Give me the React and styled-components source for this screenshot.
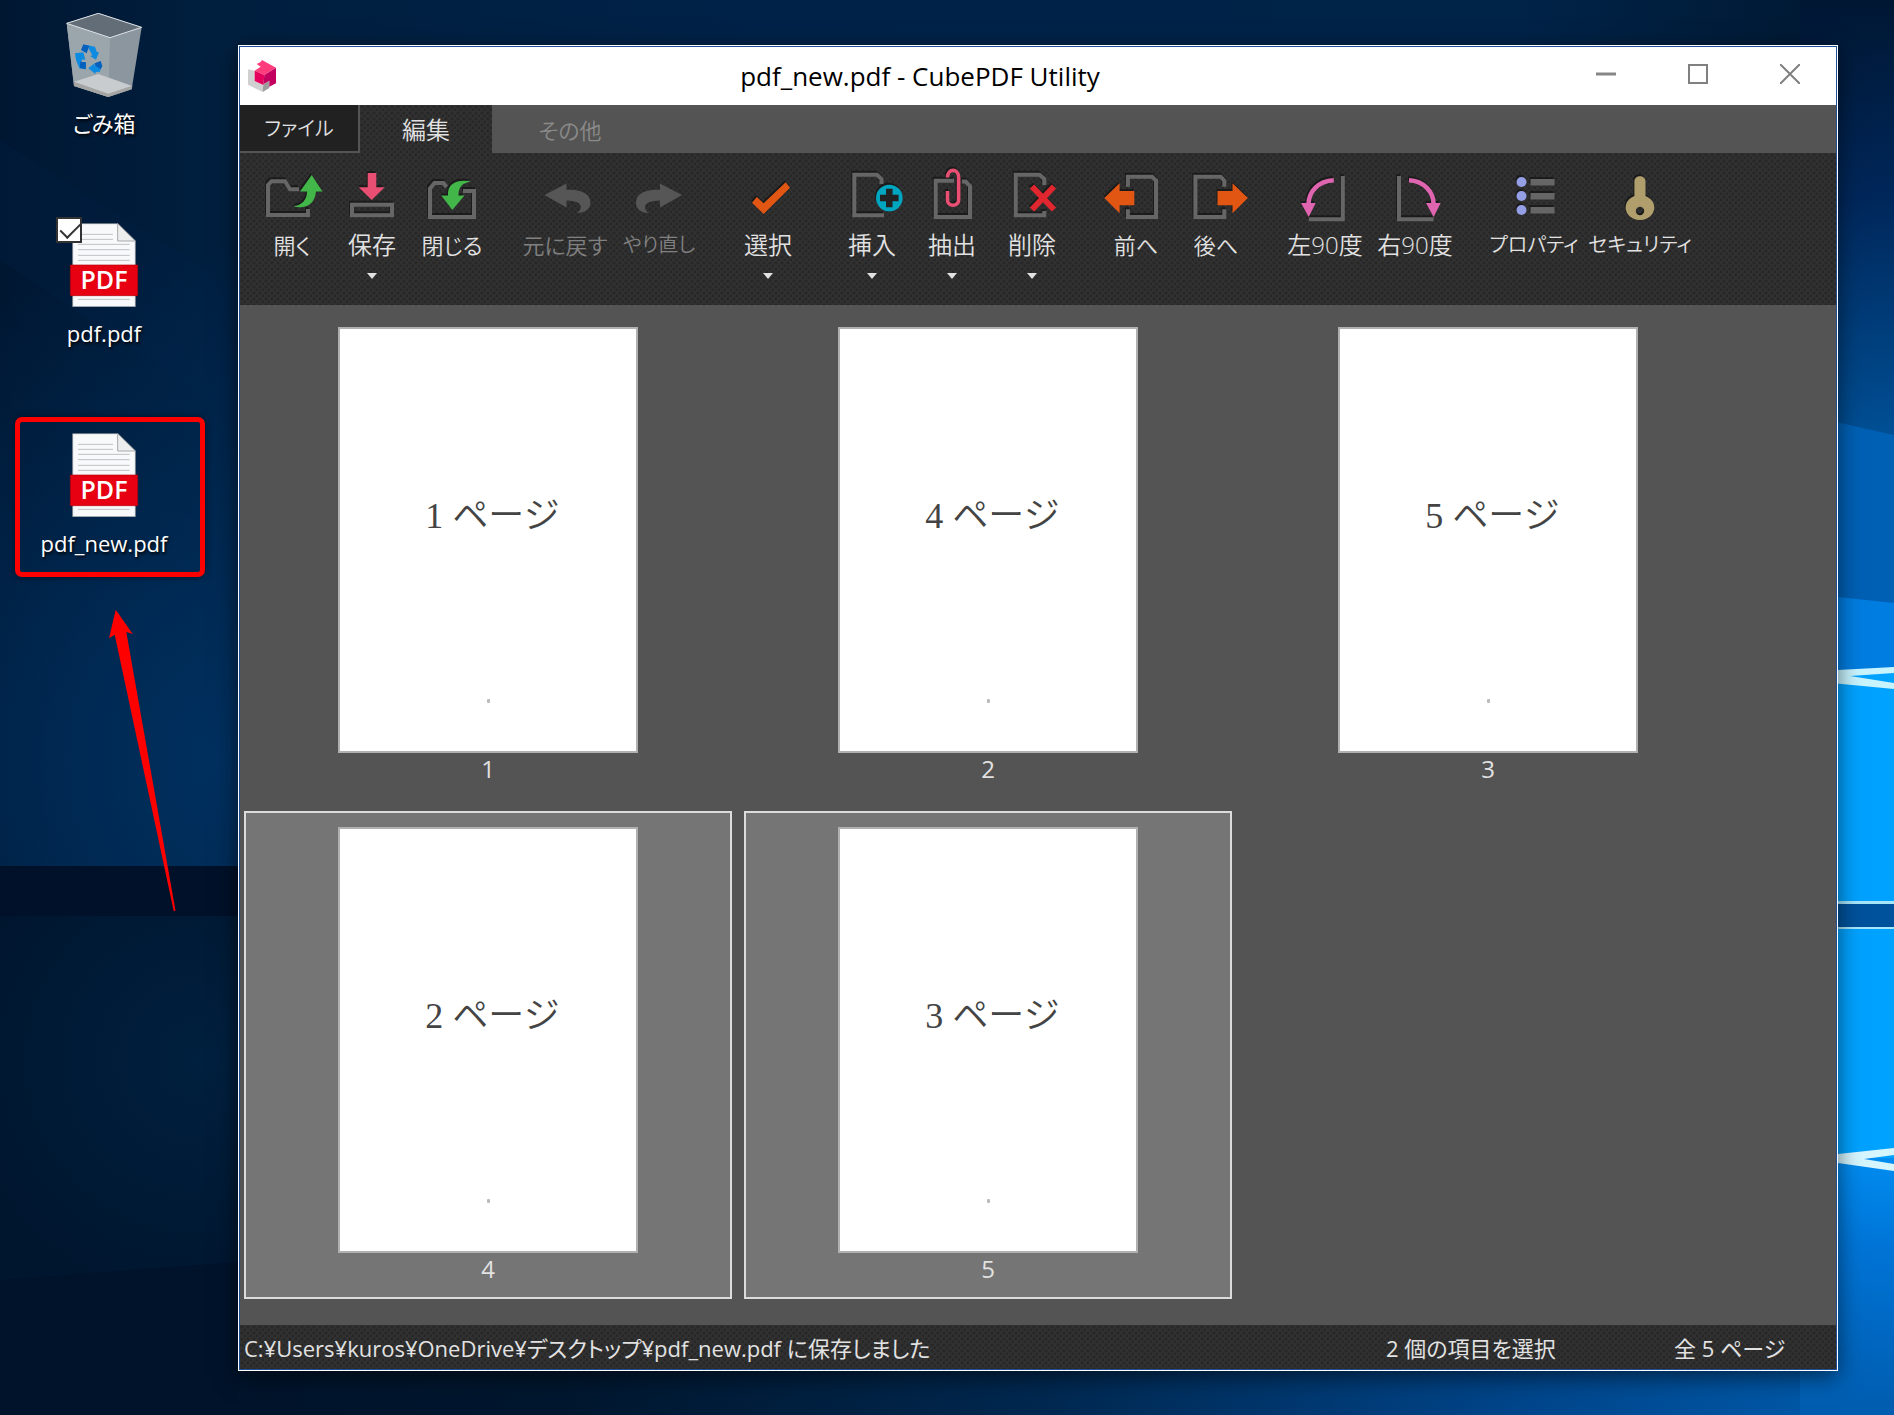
import React from "react";
import styled, { createGlobalStyle, css } from "styled-components";

const UI = '"Open Sans", "Noto Sans CJK JP", sans-serif';
const MINCHO = '"Liberation Serif", "Noto Sans CJK JP", serif';

const color = {
  panel: "#545454",
  panelSelected: "#757575",
  dark: "#212121",
  text: "#e2e2e2",
  muted: "#8a8a8a",
  line: "#666666",
  green: "#43b649",
  pink: "#e84f72",
  orange: "#e25613",
  magenta: "#e065b0",
};

const Global = createGlobalStyle`
  * { box-sizing: border-box; }
  body {
    margin: 0;
    font-family: ${UI};
    font-size: 22px;
    line-height: 32px;
    font-feature-settings: "palt";
  }
  button {
    font: inherit;
    font-feature-settings: "palt";
    border: 0;
    padding: 0;
    background: none;
    color: inherit;
    white-space: nowrap;
  }
  svg { display: block; }
`;

const mesh = css`
  background-color: #313131;
  background-image: radial-gradient(circle at 2px 2px, #272727 1px, transparent 2px),
    radial-gradient(circle at 5px 5px, #272727 1px, transparent 2px);
  background-size: 6px 6px;
`;

/* ---------- desktop ---------- */

const Desktop = styled.main`
  position: relative;
  display: grid;
  grid-template-columns: 238px minmax(0, 1fr);
  min-height: 100vh;
  overflow: hidden;
  background: #001a38;
`;

const WallpaperArt = styled.svg`
  position: absolute;
  inset: 0;
  width: 100%;
  height: 100%;
`;

const IconColumn = styled.ul`
  position: relative;
  width: 208px;
  margin: 0;
  padding: 13px 0 0;
  list-style: none;
`;

const IconItem = styled.li`
  position: relative;
  display: flex;
  flex-direction: column;
  align-items: center;
  gap: 10px;
  height: 210px;
  color: #fff;
  text-shadow: 1px 2px 3px #000;
`;

const Highlight = styled.div`
  position: absolute;
  top: -16px;
  left: 15px;
  width: 190px;
  height: 160px;
  border: 5px solid #f00;
  border-radius: 7px;
  box-shadow: 0 0 6px rgba(0, 0, 0, 0.5);
`;

const ArrowArt = styled.svg`
  position: absolute;
  top: 609px;
  left: 108px;
  width: 70px;
  height: 303px;
`;

const IconCheck = styled.input`
  appearance: none;
  position: absolute;
  top: -6px;
  left: 56px;
  width: 26px;
  height: 26px;
  margin: 0;
  border: 2px solid #333;
  background: #fff;

  &:checked::after {
    content: "";
    position: absolute;
    top: -1px;
    left: 7px;
    width: 9px;
    height: 18px;
    border: solid #333;
    border-width: 0 2px 2px 0;
    transform: rotate(45deg);
  }
`;

/* ---------- window ---------- */

const Window = styled.section`
  position: relative;
  display: flex;
  flex-direction: column;
  margin: 45px 56px 44px 0;
  border: 1px solid #fff;
  outline: 1px solid #1f4e96;
  outline-offset: -2px;
  padding: 1px;
  background: #1f4e96;
  box-shadow: 0 6px 22px rgba(0, 0, 0, 0.55);
`;

const TitleBar = styled.header`
  display: grid;
  grid-template-columns: 40px 1fr 276px;
  align-items: center;
  height: 58px;
  background: #fff;
  color: #000;
`;

const AppIcon = styled.svg`
  width: 28px;
  height: 32px;
  margin-left: 8px;
`;

const Title = styled.h1`
  margin: 0;
  font-size: 26px;
  font-weight: 400;
  line-height: 32px;
  text-align: center;
`;

const WindowControls = styled.div`
  display: grid;
  grid-template-columns: repeat(3, 92px);
  height: 100%;
`;

const WindowControl = styled.button`
  display: grid;
  place-items: center;
  padding-bottom: 4px;
`;

const TabBar = styled.nav`
  display: flex;
  height: 48px;
  background: ${color.panel};
  color: ${color.text};
`;

const Tab = styled.button`
  width: ${(p) => p.$width}px;
  padding-top: 2px;
  font-size: ${(p) => p.$size}px;
  font-weight: 350;
  ${(p) => p.$kind === "file" && css`
    border: solid ${color.panel};
    border-width: 0 2px 2px 0;
    background: ${color.dark};
  `}
  ${(p) => p.$kind === "active" && mesh}
  ${(p) => p.$kind === "idle" && css`color: ${color.muted};`}
`;

const Ribbon = styled.div`
  display: flex;
  gap: 24px;
  height: 152px;
  padding: 13px 12px 0;
  color: ${color.text};
  ${mesh}
`;

const RibbonGroup = styled.div`
  display: flex;
`;

const RibbonButton = styled.button`
  display: flex;
  flex-direction: column;
  align-items: center;
  width: ${(p) => p.$width}px;
  color: ${(p) => (p.disabled ? "#808080" : color.text)};
`;

const RibbonIcon = styled.svg`
  width: 64px;
  height: 56px;
  fill: none;
  overflow: visible;
  filter: ${(p) => (p.$flat ? "none" : "drop-shadow(-1px -2px 0 #1b1b1b)")};
`;

const RibbonLabel = styled.span`
  margin-top: 7px;
  font-size: ${(p) => p.$size}px;
  font-weight: 350;
`;

const Caret = styled.span`
  margin-top: 12px;
  border: 5px solid transparent;
  border-top: 6px solid ${color.text};
  border-bottom: 0;
`;

const Pages = styled.ul`
  flex: 1;
  display: grid;
  grid-template-columns: repeat(auto-fill, 488px);
  align-content: start;
  gap: 12px;
  margin: 0;
  padding: 6px 4px;
  list-style: none;
  background: ${color.panel};
  color: ${color.text};
`;

const PageCell = styled.li`
  display: flex;
  flex-direction: column;
  align-items: center;
  height: 488px;
  padding-top: 14px;
  border: 2px solid ${(p) => (p.$selected ? "#dcdcdc" : "transparent")};
  background: ${(p) => (p.$selected ? color.panelSelected : "transparent")};
  font-size: 24px;
`;

const Paper = styled.div`
  display: flex;
  flex-direction: column;
  align-items: center;
  width: 300px;
  height: 426px;
  padding-top: 163px;
  border: 2px solid #b0b0b0;
  background: #fff;
  color: #444;
  font-family: ${MINCHO};
  font-size: 36px;
  line-height: 48px;
  font-feature-settings: normal;
`;

const PaperText = styled.div`
  display: flex;
  font-weight: 350;
`;

const PaperNumber = styled.span`
  width: 36px;
  text-align: center;
`;

const PaperFooter = styled.div`
  width: 3px;
  height: 4px;
  margin-top: 159px;
  border-radius: 1px;
  background: #bbb;
`;

const StatusBar = styled.footer`
  display: flex;
  align-items: center;
  height: 44px;
  padding: 2px 0 0 4px;
  color: ${color.text};
  ${mesh}
`;

const StatusPath = styled.span`
  flex: 1;
`;

const StatusCell = styled.span`
  width: ${(p) => p.$width}px;
`;

/* ---------- drawings ---------- */

const stroke = { stroke: color.line, strokeWidth: 4 };

const icons = {
  open: (
    <>
      <path {...stroke} d="M48 43V49H8V19L11.500 15.300H25L30 23.300H39" />
      <path fill={color.green} d="M51.700 9L62.500 25.500H56C55 38 46 43.500 33.500 40.500C42 39 47 34 47 25.500H40Z" />
    </>
  ),
  save: (
    <>
      <rect {...stroke} x="12" y="38.700" width="40" height="10.500" />
      <path fill={color.pink} d="M27.700 7H36.300V21.300H44.700L31.700 34L18.700 21.300H27.700Z" />
    </>
  ),
  close: (
    <>
      <path {...stroke} d="M26.500 21L23.500 17H14.500L10 22.500V51H54V25H43" />
      <path fill={color.green} d="M32.300 44L21.300 29.500H28C27 17 38 13 51 15.500C42 17 38.500 21 38.500 29.500H44.500Z" />
    </>
  ),
  undo: <path fill="#565656" d="M11.500 29L33.500 17.500V24C48 23 57.500 28 57.500 37C57.500 43 52 47 44 47C50 43 51 35 33.500 34.500V41.500Z" />,
  redo: <path fill="#565656" d="M55 29L33 17.500V24C18 23 9 28 9 37C9 43 14 47 22 47C16 43 15 35 33 34.500V41.500Z" />,
  select: <path fill={color.orange} d="M16 36.700L20.800 31L27.600 37.300L49.700 16.300L54 21.700L27.600 48Z" />,
  insert: (
    <>
      <path {...stroke} d="M41.500 18V13L37 8.700H14.300V49.300H44" />
      <circle cx="49.300" cy="32" r="13.300" fill="#00a5c0" />
      <path stroke="#222" strokeWidth="6.500" d="M40 32H58.600M49.300 22.700V41.300" />
    </>
  ),
  extract: (
    <>
      <path {...stroke} d="M34 14.700H15.700V51H50V20L45.700 15.500H42" />
      <path stroke={color.pink} strokeWidth="3.600" d="M27.500 11.500C27.500 2 38.600 2 38.600 11.500V34C38.600 41 27.500 41 27.500 34V25" />
    </>
  ),
  remove: (
    <>
      <path {...stroke} d="M44.300 19V13L39.600 8.700H15.700V49.300H44.300V45" />
      <path stroke="#e0262e" strokeWidth="6" d="M32 20.500L54 43.500M54 20.500L32 43.500" />
    </>
  ),
  prev: (
    <>
      <path {...stroke} d="M23.900 20.700V10.700H48L52 14.700V51H23.900V43.300" />
      <path fill={color.orange} d="M0.300 32L15.600 17.300V25H30.300V39.300H15.600V47.300Z" />
    </>
  ),
  next: (
    <>
      <path {...stroke} d="M40.300 20.700V14.700L36.700 10.700H11.400V51H40.300V43.300" />
      <path fill={color.orange} d="M63.900 32L48.500 17.300V25H33.500V39.300H48.500V47.300Z" />
    </>
  ),
  left: (
    <>
      <path {...stroke} d="M49.800 10V53.300H15.700" />
      <path stroke={color.magenta} strokeWidth="4.500" d="M40.800 14.300C25 15 15.700 26 15.500 38" />
      <path fill={color.magenta} d="M8 37H22.700L15.700 51Z" />
    </>
  ),
  right: (
    <>
      <path {...stroke} d="M16 10V53.300H50.600" />
      <path stroke={color.magenta} strokeWidth="4.500" d="M26 14.300C41 15 50.500 26 50.600 38" />
      <path fill={color.magenta} d="M43 37H57.700L50.600 51Z" />
    </>
  ),
  properties: (
    <>
      {[16, 30, 44].map((y) => (
        <g key={y}>
          <circle cx="19.500" cy={y} r="5" fill="#949fe6" />
          <rect x="28.500" y={y - 3} width="24" height="6.500" fill={color.line} />
        </g>
      ))}
    </>
  ),
  security: (
    <path
      fill="#b09f6c"
      fillRule="evenodd"
      d="M26.400 30V15.500C26.400 8.500 37.500 8.500 37.500 15.500V30A14.300 12.500 0 1 1 26.400 30ZM32 40.800A4.200 4.200 0 1 0 32 49.200A4.200 4.200 0 1 0 32 40.800Z"
    />
  ),
};

function Wallpaper() {
  return (
    <WallpaperArt viewBox="0 0 1894 1415" preserveAspectRatio="none" aria-hidden="true">
      <defs>
        <linearGradient id="base" x1="0" x2="1" y1="0" y2="0">
          <stop offset="0" stopColor="#001732" />
          <stop offset="0.12" stopColor="#001f3f" />
          <stop offset="0.4" stopColor="#002248" />
          <stop offset="0.8" stopColor="#002348" />
          <stop offset="1" stopColor="#00172f" />
        </linearGradient>
        <radialGradient id="leftGlow" cx="240" cy="760" r="520" gradientUnits="userSpaceOnUse">
          <stop offset="0" stopColor="#003060" />
          <stop offset="1" stopColor="#003060" stopOpacity="0" />
        </radialGradient>
        <radialGradient id="lowGlow" cx="200" cy="1060" r="240" gradientUnits="userSpaceOnUse">
          <stop offset="0" stopColor="#00203f" />
          <stop offset="1" stopColor="#00162f" />
        </radialGradient>
        <linearGradient id="floor" x1="0" x2="1" y1="0" y2="0">
          <stop offset="0" stopColor="#001229" />
          <stop offset="0.3" stopColor="#00172f" />
          <stop offset="0.55" stopColor="#002850" />
          <stop offset="0.8" stopColor="#00458a" />
          <stop offset="1" stopColor="#005cae" />
        </linearGradient>
        <linearGradient id="rightSky" x1="0" x2="0" y1="0" y2="1">
          <stop offset="0" stopColor="#001733" />
          <stop offset="0.45" stopColor="#00275a" />
          <stop offset="1" stopColor="#005096" />
        </linearGradient>
        <linearGradient id="rightBottom" x1="0" x2="0" y1="0" y2="1">
          <stop offset="0" stopColor="#008cf0" />
          <stop offset="0.35" stopColor="#0074d6" />
          <stop offset="1" stopColor="#005cae" />
        </linearGradient>
      </defs>
      <rect width="1894" height="1415" fill="url(#base)" />
      <path d="M0 140L240 290V420L0 260Z" fill="#00254a" opacity="0.2" />
      <rect width="238" height="868" fill="url(#leftGlow)" />
      <path d="M0 866H238V916H0Z" fill="#001129" />
      <rect y="916" width="240" height="499" fill="url(#lowGlow)" />
      <rect y="1371" width="1894" height="44" fill="url(#floor)" />
      <path d="M0 1280L238 1262V1415H0Z" fill="#00132b" />
      <rect x="1800" width="94" height="440" fill="url(#rightSky)" />
      <path d="M1800 414L1894 435V610H1800Z" fill="#0060b4" />
      <path d="M1800 593L1894 603V700H1800Z" fill="#007de0" />
      <path d="M1800 670H1894V1160H1800Z" fill="#00a2ff" />
      <path d="M1800 672L1894 667V673L1850 676L1894 683V689L1800 680Z" fill="#c8f4ff" />
      <path d="M1800 901H1894V929H1800Z" fill="#a6e6fb" />
      <path d="M1800 904H1894V927H1800Z" fill="#00529c" />
      <path d="M1800 1158L1894 1158V1415H1800Z" fill="url(#rightBottom)" />
      <path d="M1838 1154L1894 1148V1155L1864 1159L1894 1164V1171L1838 1163Z" fill="#d6f6ff" />
    </WallpaperArt>
  );
}

function RecycleBin() {
  return (
    <svg width="84" height="84" viewBox="186 39 252 252" aria-hidden="true">
      <path d="M200 70L295 40L425 82L395 268L325 291L222 258Z" fill="#8b969f" />
      <path d="M200 70L330 113L325 291L222 258Z" fill="#9ba5ac" />
      <path d="M222 245L295 222L397 258L325 283Z" fill="#c9cccf" />
      <path d="M222 246L325 281V291L222 258ZM325 281L397 257L395 268L325 291Z" fill="#a5a5a3" />
      <path d="M200 70L295 40L425 82L330 113Z" fill="#626d78" stroke="#dde2e6" strokeWidth="3" />
      <path d="M262 136L285 140L290 155L297 157L288 179L270 168L277 166L268 150ZM225 160L250 157L256 180L247 178L243 188L258 188L257 208L238 205L228 180ZM265 205L283 190L284 197L305 195L300 215L287 216L286 222Z" fill="#0d8be0" />
      <path d="M243 150L250 133L268 137L260 160ZM240 185L258 187L257 208L240 204ZM284 190L302 183L307 198L302 208L286 197Z" fill="#0560bd" />
    </svg>
  );
}

function PdfFile() {
  return (
    <svg width="84" height="84" viewBox="186 669 252 252" aria-hidden="true">
      <path d="M218 671H354L406 723V920H218Z" fill="#f8f9fa" stroke="#8d9296" strokeWidth="2" />
      <path d="M353 671V723H406Z" fill="#eceded" stroke="#a6a8aa" strokeWidth="3" />
      <path d="M234 703H339M234 718H339M234 733H389M234 749H389M234 766H389M234 781H389M234 898H389" stroke="#bfc1c3" strokeWidth="3" />
      <path d="M211 795H413V887H211Z" fill="#e60012" stroke="#b3000e" strokeWidth="2" />
      <text x="312" y="866" textAnchor="middle" fill="#fff" fontFamily="Open Sans, sans-serif" fontWeight="600" fontSize="75" style={{ textShadow: "none" }}>
        PDF
      </text>
    </svg>
  );
}

const shortcuts = [
  { name: "ごみ箱", art: <RecycleBin /> },
  { name: "pdf.pdf", art: <PdfFile />, checked: true },
  { name: "pdf_new.pdf", art: <PdfFile />, highlighted: true },
];

const groups = [
  [
    { icon: "open", label: "開く", size: 22, width: 80 },
    { icon: "save", label: "保存", size: 24, width: 80, menu: true },
    { icon: "close", label: "閉じる", size: 22, width: 80 },
  ],
  [
    { icon: "undo", label: "元に戻す", size: 22, width: 98, disabled: true },
    { icon: "redo", label: "やり直し", size: 20, width: 90, disabled: true },
  ],
  [{ icon: "select", label: "選択", size: 24, width: 80, menu: true }],
  [
    { icon: "insert", label: "挿入", size: 24, width: 80, menu: true },
    { icon: "extract", label: "抽出", size: 24, width: 80, menu: true },
    { icon: "remove", label: "削除", size: 24, width: 80, menu: true },
  ],
  [
    { icon: "prev", label: "前へ", size: 22, width: 80 },
    { icon: "next", label: "後へ", size: 22, width: 80 },
  ],
  [
    { icon: "left", label: "左90度", size: 24, width: 90 },
    { icon: "right", label: "右90度", size: 24, width: 90 },
  ],
  [
    { icon: "properties", label: "プロパティ", size: 20, width: 100 },
    { icon: "security", label: "セキュリティ", size: 20, width: 112 },
  ],
];

const pages = [
  { content: 1 },
  { content: 4 },
  { content: 5 },
  { content: 2, selected: true },
  { content: 3, selected: true },
];

export default function App() {
  return (
    <Desktop>
      <Global />
      <Wallpaper />
      <IconColumn>
        {shortcuts.map((s) => (
          <IconItem key={s.name}>
            {s.highlighted && <Highlight />}
            {s.art}
            {s.checked && <IconCheck type="checkbox" defaultChecked aria-label={s.name} />}
            <span>{s.name}</span>
          </IconItem>
        ))}
      </IconColumn>
      <ArrowArt viewBox="108 609 70 303" aria-hidden="true">
        <path d="M115.700 609.700L132.700 634L126.300 632L175.500 910.700L173.700 911L114.700 634.700L109 638.300Z" fill="#f00" />
      </ArrowArt>

      <Window>
        <TitleBar>
          <AppIcon viewBox="24 30 84 96" aria-hidden="true">
            <path d="M24 58L44 62V93L70 105L68 126L24 104Z" fill="#d0d0d0" />
            <path d="M70 103L88 92V114L68 126Z" fill="#9c9c9c" />
            <path d="M66 30L108 53L73 75L44 62L62 50L50 42L62 36Z" fill="#ff3d7c" />
            <path d="M44 62L73 75L70 105L44 93Z" fill="#e6005e" />
            <path d="M73 75L108 53V100L88 110V92L70 103Z" fill="#c10060" />
          </AppIcon>
          <Title>pdf_new.pdf - CubePDF Utility</Title>
          <WindowControls>
            <WindowControl aria-label="最小化">
              <svg width="20" height="20"><path d="M0 10H20" stroke="#868686" strokeWidth="3" /></svg>
            </WindowControl>
            <WindowControl aria-label="最大化">
              <svg width="20" height="20"><rect x="1" y="1" width="18" height="18" fill="none" stroke="#808080" strokeWidth="2" /></svg>
            </WindowControl>
            <WindowControl aria-label="閉じる">
              <svg width="20" height="20"><path d="M0 0L20 20M20 0L0 20" stroke="#808080" strokeWidth="2" /></svg>
            </WindowControl>
          </WindowControls>
        </TitleBar>

        <TabBar>
          <Tab $kind="file" $width={120} $size={20}>ファイル</Tab>
          <Tab $kind="active" $width={132} $size={24}>編集</Tab>
          <Tab $kind="idle" $width={156} $size={22}>その他</Tab>
        </TabBar>

        <Ribbon>
          {groups.map((group, i) => (
            <RibbonGroup key={i}>
              {group.map((b) => (
                <RibbonButton key={b.icon} $width={b.width} disabled={b.disabled}>
                  <RibbonIcon viewBox="0 0 64 56" $flat={b.disabled} aria-hidden="true">{icons[b.icon]}</RibbonIcon>
                  <RibbonLabel $size={b.size}>{b.label}</RibbonLabel>
                  {b.menu && <Caret />}
                </RibbonButton>
              ))}
            </RibbonGroup>
          ))}
        </Ribbon>

        <Pages>
          {pages.map((p, i) => (
            <PageCell key={p.content} $selected={p.selected}>
              <Paper>
                <PaperText>
                  <PaperNumber>{p.content}</PaperNumber>ページ
                </PaperText>
                <PaperFooter />
              </Paper>
              {i + 1}
            </PageCell>
          ))}
        </Pages>

        <StatusBar>
          <StatusPath>C:¥Users¥kuros¥OneDrive¥デスクトップ¥pdf_new.pdf に保存しました</StatusPath>
          <StatusCell $width={288}>2 個の項目を選択</StatusCell>
          <StatusCell $width={162}>全 5 ページ</StatusCell>
        </StatusBar>
      </Window>
    </Desktop>
  );
}
